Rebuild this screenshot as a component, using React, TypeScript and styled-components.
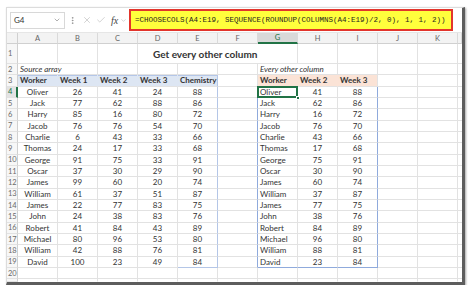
import React from 'react'
import styled, { createGlobalStyle, css } from 'styled-components'
import { Check, ChevronDown, EllipsisVertical, X } from 'lucide-react'

const GRID = '#e2e2e2'
const GREEN = '#217346'
const BLUE_EDGE = '#8faadc'
const SRC_EDGE = '#b4c6e7'

const GlobalStyle = createGlobalStyle`
  *, *::before, *::after { box-sizing: border-box; }
  html, body { margin: 0; padding: 0; background: #ffffff; }
  body { font-family: Lato, "Liberation Sans", sans-serif; color: #333333; }
`

const Page = styled.div`
  padding: 7px 0 0 6px;
`

const Window = styled.div`
  width: 459px;
  background: #ffffff;
  border-top: 1px solid #dcdcdc;
  border-left: 1px solid #dcdcdc;
  border-right: 3px solid #5d5d5d;
  border-bottom: 3px solid #5d5d5d;
  box-shadow: 1px 1px 2px rgba(0, 0, 0, 0.35);
`

const Toolbar = styled.div`
  height: 25px;
  display: flex;
  align-items: center;
  padding: 0 9px 0 3px;
  border-bottom: 1px solid #e6e6e6;
`

const NameBox = styled.div`
  width: 55px;
  height: 17px;
  display: flex;
  align-items: center;
  justify-content: space-between;
  padding: 0 3px;
  border: 1px solid #d8d8d8;
  font-size: 8px;
  color: #333333;
`

const ToolIcon = styled.span<{ $gap: number }>`
  display: flex;
  align-items: center;
  margin-left: ${({ $gap }) => $gap}px;
  color: #b9b9b9;
`

const Fx = styled.span`
  margin-left: 5px;
  font-family: "Liberation Serif", serif;
  font-style: italic;
  font-size: 10px;
  color: #444444;
`

const FormulaBar = styled.div`
  margin-left: auto;
  width: 324px;
  height: 22px;
  display: flex;
  align-items: center;
  padding-left: 4px;
  background: #ffff3c;
  border: 2px solid #e2352c;
  font-family: "Liberation Mono", monospace;
  font-size: 7.5px;
  color: #1e1e1e;
  white-space: nowrap;
`

const Sheet = styled.div`
  display: grid;
  grid-template-columns: 11px repeat(11, 40px) 4px;
  grid-template-rows: 11px 20px repeat(19, 11.333px) 3px;
`

const Corner = styled.div`
  background: #f3f3f3;
  border-right: 1px solid #d0d0d0;
  border-bottom: 1px solid #d0d0d0;
`

const ColHead = styled.div<{ $active?: boolean }>`
  display: flex;
  align-items: center;
  justify-content: center;
  font-size: 7.5px;
  color: ${({ $active }) => ($active ? GREEN : '#666666')};
  background: ${({ $active }) => ($active ? '#d9d9d9' : '#f3f3f3')};
  border-right: 1px solid #dadada;
  border-bottom: ${({ $active }) => ($active ? `2px solid ${GREEN}` : '1px solid #d0d0d0')};
`

const RowHead = styled.div<{ $active?: boolean }>`
  display: flex;
  align-items: center;
  padding-left: 1px;
  font-size: 7.5px;
  color: ${({ $active }) => ($active ? GREEN : '#6a6a6a')};
  background: ${({ $active }) => ($active ? '#e3e3e3' : '#f7f7f7')};
  border-right: ${({ $active }) => ($active ? `2px solid ${GREEN}` : '1px solid #d0d0d0')};
  border-bottom: 1px solid ${GRID};
`

type CellProps = {
  $span?: number
  $bg?: string
  $align?: 'left' | 'center'
  $bold?: boolean
  $italic?: boolean
  $size?: number
  $indent?: number
  $right?: string
  $bottom?: string
  $left?: string
  $top?: string
  $active?: boolean
}

const Cell = styled.div<CellProps>`
  position: relative;
  grid-column: ${({ $span }) => ($span ? `span ${$span}` : 'auto')};
  display: flex;
  align-items: center;
  justify-content: ${({ $align }) => ($align === 'center' ? 'center' : 'flex-start')};
  padding: 0 2px 0 ${({ $indent }) => $indent ?? 2}px;
  min-width: 0;
  white-space: nowrap;
  font-size: ${({ $size }) => $size ?? 8}px;
  font-weight: ${({ $bold }) => ($bold ? 700 : 400)};
  font-style: ${({ $italic }) => ($italic ? 'italic' : 'normal')};
  background: ${({ $bg }) => $bg ?? '#ffffff'};
  border-right: 1px solid ${({ $right }) => $right ?? GRID};
  border-bottom: 1px solid ${({ $bottom }) => $bottom ?? GRID};
  box-shadow: ${({ $left, $top }) =>
    [$left && `inset 1px 0 0 ${$left}`, $top && `inset 0 1px 0 ${$top}`].filter(Boolean).join(', ') || 'none'};

  ${({ $active }) =>
    $active &&
    css`
      &::after {
        content: '';
        position: absolute;
        inset: -1px -1px -1px -1px;
        border: 2px solid ${GREEN};
      }
      &::before {
        content: '';
        position: absolute;
        right: -3px;
        bottom: -3px;
        width: 4px;
        height: 4px;
        background: ${GREEN};
        border: 1px solid #ffffff;
        z-index: 1;
      }
    `}
`

const LETTERS = ['A', 'B', 'C', 'D', 'E', 'F', 'G', 'H', 'I', 'J', 'K']

const SOURCE: [string, number, number, number, number][] = [
  ['Oliver', 26, 41, 24, 88],
  ['Jack', 77, 62, 88, 86],
  ['Harry', 85, 16, 80, 72],
  ['Jacob', 76, 76, 54, 70],
  ['Charlie', 6, 43, 33, 66],
  ['Thomas', 24, 17, 33, 68],
  ['George', 91, 75, 33, 91],
  ['Oscar', 37, 30, 29, 90],
  ['James', 99, 60, 20, 74],
  ['William', 61, 37, 51, 87],
  ['James', 22, 77, 83, 75],
  ['John', 24, 38, 83, 76],
  ['Robert', 41, 84, 43, 89],
  ['Michael', 80, 96, 53, 80],
  ['William', 42, 88, 76, 81],
  ['David', 100, 23, 49, 84],
]

const SRC_HEAD = ['Worker', 'Week 1', 'Week 2', 'Week 3', 'Chemistry']
const OUT_HEAD = ['Worker', 'Week 2', 'Week 3']

const Blank = ({ n, ...rest }: { n: number } & CellProps) => (
  <>
    {Array.from({ length: n }, (_, i) => (
      <Cell key={i} {...rest} />
    ))}
  </>
)

const Partial = styled.div`
  border-bottom: 1px solid ${GRID};
`

const DataRow = ({ row, index }: { row: [string, number, number, number, number]; index: number }) => {
  const last = index === SOURCE.length - 1
  const first = index === 0
  const [name, w1, w2, w3, chem] = row
  const outBottom = last ? BLUE_EDGE : undefined
  return (
    <>
      <RowHead $active={first}>{index + 4}</RowHead>
      <Cell $align="center">{name}</Cell>
      <Cell $align="center">{w1}</Cell>
      <Cell $align="center">{w2}</Cell>
      <Cell $align="center">{w3}</Cell>
      <Cell $align="center" $right={SRC_EDGE} $bottom={last ? SRC_EDGE : undefined}>
        {chem}
      </Cell>
      <Cell $right={BLUE_EDGE} />
      <Cell $active={first} $bottom={outBottom}>
        {name}
      </Cell>
      <Cell $align="center" $bottom={outBottom}>
        {w2}
      </Cell>
      <Cell $align="center" $bottom={outBottom} $right={BLUE_EDGE}>
        {chem}
      </Cell>
      <Blank n={2} />
      <Partial />
    </>
  )
}

export default function App() {
  return (
    <>
      <GlobalStyle />
      <Page>
        <Window>
          <Toolbar>
            <NameBox>
              G4
              <ChevronDown size={8} color="#8a8a8a" />
            </NameBox>
            <ToolIcon $gap={3}>
              <EllipsisVertical size={9} color="#8a8a8a" />
            </ToolIcon>
            <ToolIcon $gap={5}>
              <X size={10} strokeWidth={1.5} />
            </ToolIcon>
            <ToolIcon $gap={4}>
              <Check size={10} strokeWidth={1.5} />
            </ToolIcon>
            <Fx>fx</Fx>
            <ToolIcon $gap={2}>
              <ChevronDown size={7} />
            </ToolIcon>
            <FormulaBar>=CHOOSECOLS(A4:E19, SEQUENCE(ROUNDUP(COLUMNS(A4:E19)/2, 0), 1, 1, 2))</FormulaBar>
          </Toolbar>

          <Sheet>
            <Corner />
            {LETTERS.map((l) => (
              <ColHead key={l} $active={l === 'G'}>
                {l}
              </ColHead>
            ))}
            <ColHead />

            <RowHead>1</RowHead>
            <Blank n={3} />
            <Cell $span={4} $bold $size={10} $indent={15}>
              Get every other column
            </Cell>
            <Blank n={4} />
            <Partial />

            <RowHead>2</RowHead>
            <Cell $span={2} $italic>
              Source array
            </Cell>
            <Blank n={4} />
            <Cell $span={2} $italic>
              Every other column
            </Cell>
            <Blank n={3} />
            <Partial />

            <RowHead>3</RowHead>
            {SRC_HEAD.map((h, i) => (
              <Cell
                key={h}
                $bold
                $bg="#dde6f3"
                $top={SRC_EDGE}
                $right={i === SRC_HEAD.length - 1 ? SRC_EDGE : '#dde6f3'}
              >
                {h}
              </Cell>
            ))}
            <Cell />
            {OUT_HEAD.map((h, i) => (
              <Cell key={h + i} $bold $bg="#fbe3d6" $right={i === 2 ? GRID : '#fbe3d6'}>
                {h}
              </Cell>
            ))}
            <Blank n={2} />
            <Partial />

            {SOURCE.map((row, i) => (
              <DataRow key={i} row={row} index={i} />
            ))}

            <RowHead>20</RowHead>
            <Blank n={11} />
            <Partial />

            <RowHead />
            <Blank n={11} $bottom="transparent" />
            <div />
          </Sheet>
        </Window>
      </Page>
    </>
  )
}
